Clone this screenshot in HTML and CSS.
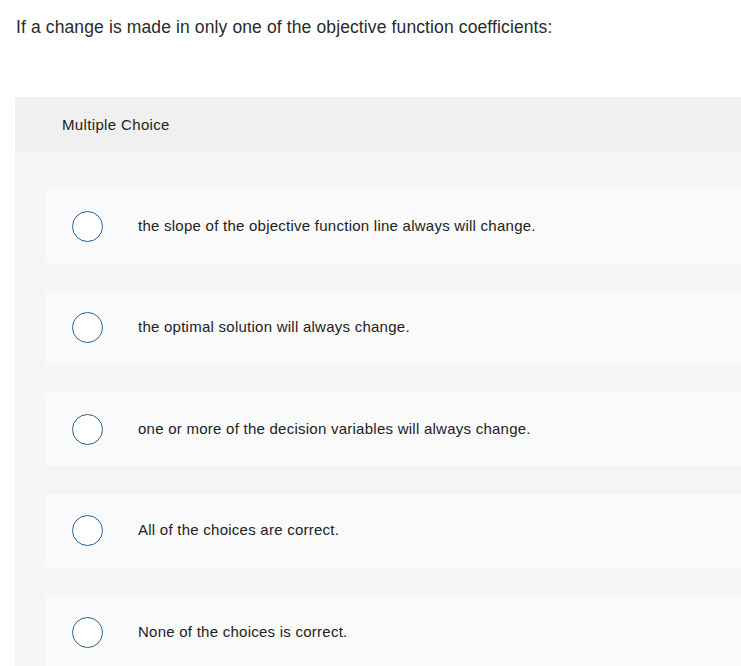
FILE: index.html
```html
<!DOCTYPE html>
<html>
<head>
<meta charset="utf-8">
<link rel="stylesheet" href="styles.css">
</head>
<body>
<div class="page">
  <p class="question">If a change is made in only one of the objective function coefficients:</p>
  <div class="panel">
    <div class="panel-head">Multiple Choice</div>
    <div class="panel-body">
      <div class="option"><span class="radio"></span><span class="label">the slope of the objective function line always will change.</span></div>
      <div class="option"><span class="radio"></span><span class="label">the optimal solution will always change.</span></div>
      <div class="option"><span class="radio"></span><span class="label">one or more of the decision variables will always change.</span></div>
      <div class="option"><span class="radio"></span><span class="label">All of the choices are correct.</span></div>
      <div class="option"><span class="radio"></span><span class="label">None of the choices is correct.</span></div>
    </div>
  </div>
</div>
</body>
</html>
```
FILE: styles.css
```css
html, body {
  margin: 0;
  padding: 0;
  background: #ffffff;
}
html {
  height: 666px;
  overflow: hidden;
}
body {
  font-family: "Liberation Sans", Arial, sans-serif;
  color: #222222;
}
.page {
  padding: 17px 0 0 15px;
}
.question {
  margin: 0 0 0 1px;
  font-size: 17.5px;
  letter-spacing: 0.12px;
  line-height: 20px;
  color: #2a2a2a;
}
.panel {
  margin-top: 60px;
}
.panel-head {
  background: #f0f0f0;
  height: 56px;
  box-sizing: border-box;
  padding: 0 0 2px 47px;
  display: flex;
  align-items: center;
  font-size: 15px;
  letter-spacing: 0.35px;
  color: #222222;
}
.panel-body {
  background: #f5f5f5;
  padding: 36px 0 0 30px;
  display: flex;
  flex-direction: column;
  gap: 27.5px;
}
.option {
  background: #fafafa;
  height: 74px;
  border-radius: 3px 0 0 3px;
  display: flex;
  align-items: center;
  padding-left: 27px;
}
.radio {
  width: 31px;
  height: 31px;
  box-sizing: border-box;
  border: 1.5px solid #2d5f8e;
  border-radius: 50%;
  background: #ffffff;
  flex: none;
}
.label {
  margin: 0 0 2px 35px;
  font-size: 15px;
  letter-spacing: 0.25px;
  color: #222222;
}
```
